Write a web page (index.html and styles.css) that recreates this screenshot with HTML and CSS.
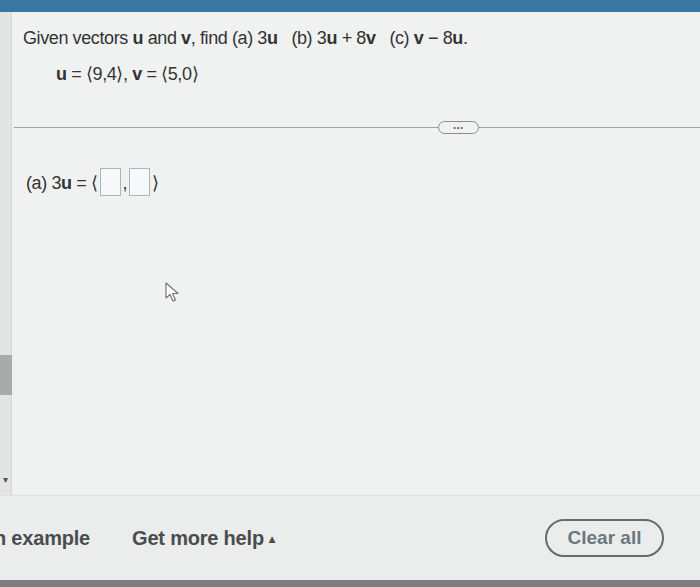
FILE: index.html
```html
<!DOCTYPE html>
<html>
<head>
<meta charset="utf-8">
<link rel="stylesheet" href="styles.css">
</head>
<body>
<div class="screen">
  <div class="topbar"></div>
  <div class="middle">
    <div class="sidebar">
      <div class="thumb"></div>
      <div class="arrow">&#9662;</div>
    </div>
    <div class="content">
      <div class="question">Given vectors <b>u</b> and <b>v</b>, find (a) 3<b>u</b> &nbsp; (b) 3<b>u</b> + 8<b>v</b> &nbsp; (c) <b>v</b> &minus; 8<b>u</b>.</div>
      <div class="given"><b>u</b> = &#10216;9,4&#10217;, <b>v</b> = &#10216;5,0&#10217;</div>
      <div class="divider"><span class="pill">&bull;&bull;&bull;</span></div>
      <div class="part">(a) 3<b>u</b> = &#10216;<span class="box"></span>,<span class="box"></span>&#10217;</div>
      <svg class="cursor" width="16" height="22" viewBox="0 0 16 22"><path d="M1 1 L1 16 L5 12.5 L8 19 L10.5 18 L7.5 11.5 L13 11.5 Z" fill="#fff" stroke="#777" stroke-width="1.2" stroke-linejoin="round"/></svg>
    </div>
  </div>
  <div class="footer">
    <span class="link cut">n example</span>
    <span class="link help">Get more help <span class="caret">&#9652;</span></span>
    <span class="spacer"></span>
    <button class="clear">Clear all</button>
  </div>
  <div class="bottom"></div>
</div>
</body>
</html>
```
FILE: styles.css
```css
html, body {
  margin: 0;
  padding: 0;
}
body {
  width: 700px;
  height: 587px;
  overflow: hidden;
  background: #eceeee;
  font-family: "Liberation Sans", Arial, sans-serif;
  color: #333;
}
.screen {
  width: 700px;
  height: 587px;
  display: flex;
  flex-direction: column;
}
.topbar {
  height: 12px;
  background: #3a76a2;
  flex: none;
}
.middle {
  flex: 1;
  display: flex;
  position: relative;
}
.sidebar {
  width: 12px;
  background: #e3e5e5;
  border-right: 1px solid #d6d8d8;
  display: flex;
  flex-direction: column;
  align-items: center;
  padding-top: 343px;
  box-sizing: border-box;
}
.thumb {
  width: 12px;
  height: 40px;
  background: #a9abab;
}
.arrow {
  margin-top: 80px;
  font-size: 10px;
  color: #555;
  line-height: 10px;
}
.content {
  flex: 1;
  position: relative;
  background: #f0f2f2;
  padding-top: 16px;
}
.question {
  font-size: 18px;
  line-height: 20px;
  padding-left: 11px;
  letter-spacing: -0.4px;
  white-space: nowrap;
}
.given {
  font-size: 18px;
  line-height: 20px;
  padding-left: 44px;
  margin-top: 16px;
  letter-spacing: -0.4px;
}
.divider {
  margin-top: 43px;
  margin-left: 2px;
  height: 1px;
  background: #9fa2a3;
  position: relative;
}
.pill {
  position: absolute;
  left: 424px;
  top: -6px;
  width: 39px;
  height: 11px;
  border: 1px solid #8a8d8f;
  border-radius: 7px;
  background: #f0f2f2;
  font-size: 7px;
  line-height: 11px;
  text-align: center;
  color: #555;
  letter-spacing: 1px;
}
.part {
  margin-top: 40px;
  padding-left: 14px;
  font-size: 18px;
  line-height: 30px;
  letter-spacing: -0.4px;
}
.box {
  display: inline-block;
  vertical-align: middle;
  width: 19px;
  height: 26px;
  border: 1px solid #a8b6c4;
  background: #f6f8f9;
  margin: -4px 2px 0;
}
.cursor {
  position: absolute;
  left: 153px;
  top: 270px;
}
.footer {
  height: 85px;
  flex: none;
  display: flex;
  align-items: center;
  border-top: 1px solid #dfe1e1;
  background: #ebeded;
  box-sizing: border-box;
  padding-right: 36px;
}
.link {
  font-size: 20px;
  font-weight: bold;
  color: #4a4c4e;
  letter-spacing: -0.2px;
}
.cut {
  margin-left: -6px;
}
.help {
  margin-left: 42px;
}
.caret {
  font-size: 12px;
  vertical-align: 2px;
}
.spacer {
  flex: 1;
}
.clear {
  width: 119px;
  height: 38px;
  border: 2px solid #676a6c;
  border-radius: 19px;
  background: transparent;
  font-family: "Liberation Sans", Arial, sans-serif;
  font-size: 19px;
  font-weight: bold;
  color: #6c7680;
}
.bottom {
  height: 7px;
  flex: none;
  background: #7b7d7e;
}
```
